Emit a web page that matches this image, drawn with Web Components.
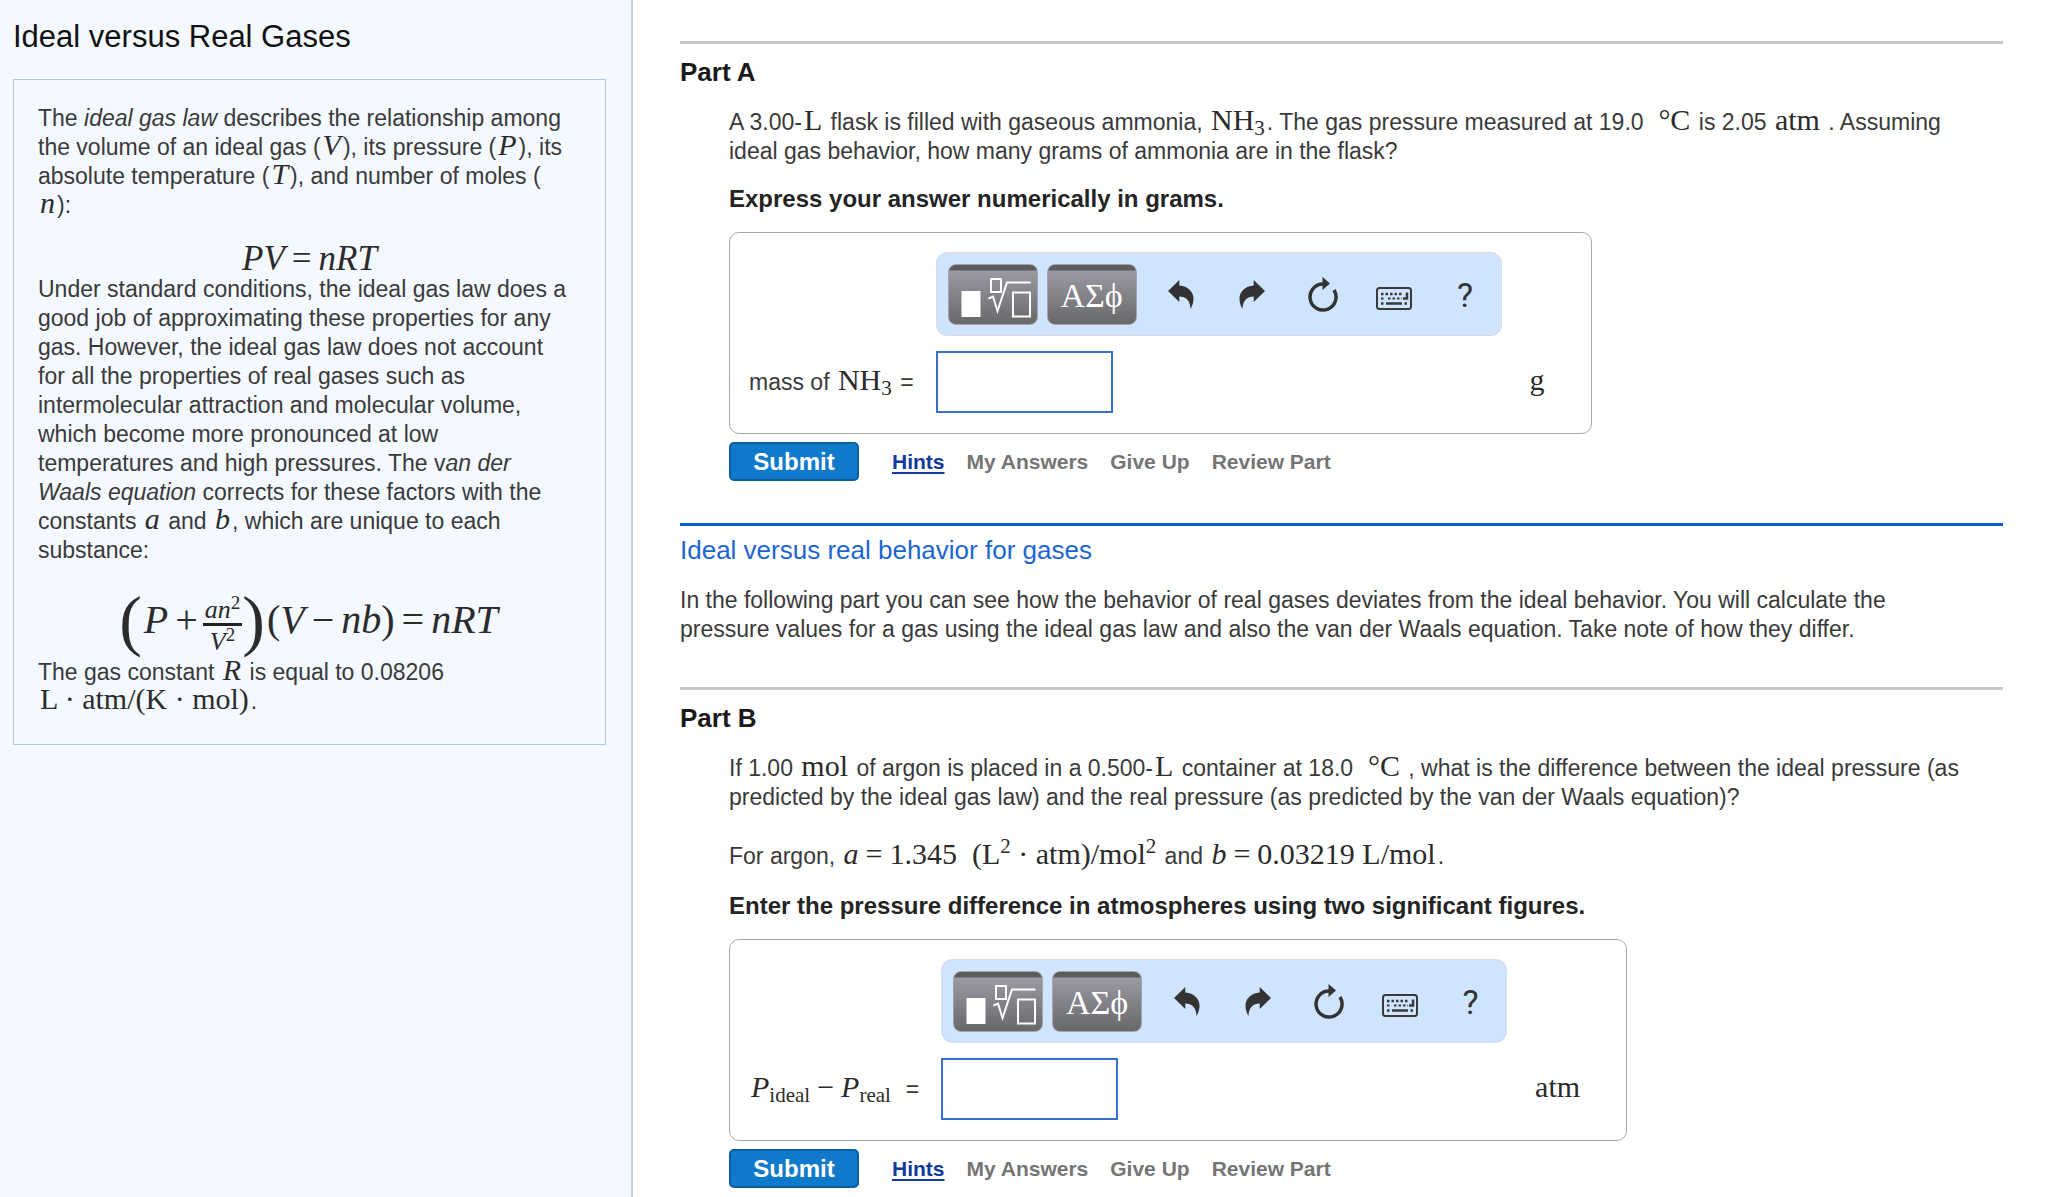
<!DOCTYPE html>
<html lang="en">
<head>
<meta charset="utf-8">
<meta name="viewport" content="width=device-width, initial-scale=1">
<title>Ideal versus Real Gases</title>
<style>
  body {
    margin: 0;
    background: #ffffff;
    color: #3a3a3a;
    font: 23px/29px "Liberation Sans", Arial, sans-serif;
  }

  p { margin: 0; }

  .formula {
    margin-top: 28px;
    line-height: 33px;
  }
</style>
</head>
<body>

<problem-layout>
  <intro-panel slot="side" heading="Ideal versus Real Gases">
    <p>The <i>ideal gas law</i> describes the relationship among the volume of an ideal gas (<math-text><i>V</i></math-text>), its pressure (<math-text><i>P</i></math-text>), its absolute temperature (<math-text><i>T</i></math-text>), and number of moles (<br><math-text><i>n</i></math-text>):</p>
    <math-block>
      <math-text><i>PV</i></math-text><math-text class="op">=</math-text><math-text><i>nRT</i></math-text>
    </math-block>
    <p>Under standard conditions, the ideal gas law does a good job of approximating these properties for any gas. However, the ideal gas law does not account for all the properties of real gases such as intermolecular attraction and molecular volume, which become more pronounced at low temperatures and high pressures. The v<i>an der Waals equation</i> corrects for these factors with the constants <math-text><i>a</i></math-text> and <math-text><i>b</i></math-text>, which are unique to each substance:</p>
    <math-block size="large">
      <math-text class="tall">(</math-text><math-text><i>P</i></math-text><math-text class="op">+</math-text><math-frac>
        <math-text slot="num"><i>an</i><sup>2</sup></math-text>
        <math-text slot="den"><i>V</i><sup>2</sup></math-text>
      </math-frac><math-text class="tall">)</math-text><math-text>(<i>V</i></math-text><math-text class="op">−</math-text><math-text><i>nb</i>)</math-text><math-text class="op">=</math-text><math-text><i>nRT</i></math-text>
    </math-block>
    <p>The gas constant <math-text><i>R</i></math-text> is equal to 0.08206 <math-text>L · atm/(K · mol)</math-text>.</p>
  </intro-panel>

  <problem-part heading="Part A">
    <p>A 3.00-<math-text>L</math-text> flask is filled with gaseous ammonia, <math-text>NH<sub>3</sub></math-text>. The gas pressure measured at 19.0 &nbsp;<math-text>°C</math-text> is 2.05 <math-text>atm</math-text> . Assuming ideal gas behavior, how many grams of ammonia are in the flask?</p>
    <span slot="instruction">Express your answer numerically in grams.</span>
    <answer-box slot="answer">
      <span slot="label">mass of <math-text>NH<sub>3</sub></math-text> =</span>
      <math-text slot="unit">g</math-text>
    </answer-box>
  </problem-part>

  <info-section heading="Ideal versus real behavior for gases">
    <p>In the following part you can see how the behavior of real gases deviates from the ideal behavior. You will calculate the pressure values for a gas using the ideal gas law and also the van der Waals equation. Take note of how they differ.</p>
  </info-section>

  <problem-part heading="Part B">
    <p>If 1.00 <math-text>mol</math-text> of argon is placed in a 0.500-<math-text>L</math-text> container at 18.0 &nbsp;<math-text>°C</math-text> , what is the difference between the ideal pressure (as predicted by the ideal gas law) and the real pressure (as predicted by the van der Waals equation)?</p>
    <p class="formula">For argon, <math-text><i>a</i></math-text><math-text class="op">=</math-text><math-text>1.345 &nbsp;(L<sup>2</sup> · atm)/mol<sup>2</sup></math-text> and <math-text><i>b</i></math-text><math-text class="op">=</math-text><math-text>0.03219 L/mol</math-text>.</p>
    <span slot="instruction">Enter the pressure difference in atmospheres using two significant figures.</span>
    <answer-box slot="answer">
      <span slot="label"><math-text><i>P</i><sub>ideal</sub></math-text><math-text class="op">−</math-text><math-text><i>P</i><sub>real</sub></math-text> &nbsp;=</span>
      <math-text slot="unit">atm</math-text>
    </answer-box>
  </problem-part>
</problem-layout>

<script>
  // Shared base: each element only has to describe its own markup.
  class BaseElement extends HTMLElement {
    constructor() {
      super();
      this.attachShadow({ mode: "open" });
    }

    connectedCallback() {
      this.shadowRoot.innerHTML = this.render().trim();
    }
  }

  class ProblemLayout extends BaseElement {
    render() {
      return `
        <style>
          :host {
            display: grid;
            grid-template-columns: 633px minmax(0, 1fr);
            min-height: 100vh;
          }

          aside {
            box-sizing: border-box;
            padding: 19px 25px 20px 13px;
            background: #f4f8ff;
            border-right: 2px solid #c3d1e2;
          }

          main { padding: 41px 43px 8px 47px; }
        </style>
        <aside><slot name="side"></slot></aside>
        <main><slot></slot></main>
      `;
    }
  }

  class IntroPanel extends BaseElement {
    render() {
      return `
        <style>
          :host { display: block; }

          h1 {
            margin: 0 0 24px;
            color: #111111;
            font-size: 31px;
            font-weight: normal;
            line-height: 36px;
          }

          .box {
            padding: 24px 24px 28px;
            border: 1px solid #b4c8dd;
          }

          ::slotted(p) { padding-right: 10px; }
        </style>
        <h1>${this.getAttribute("heading")}</h1>
        <div class="box"><slot></slot></div>
      `;
    }
  }

  // Run of serif maths, upright unless wrapped in <i>.
  // No whitespace around the slot: it would show up inside the sentence.
  class MathText extends BaseElement {
    render() {
      return `
        <style>
          :host {
            margin: 0 2px;
            color: #2b2b2b;
            font-family: "Liberation Serif", "Times New Roman", serif;
            font-size: var(--math-size, 30px);
            line-height: 20px;
            white-space: nowrap;
          }

          :host(.op) { margin: 0 5px; }

          :host(.tall) {
            margin: 0;
            font-size: 68px;
          }

          ::slotted(sub),
          ::slotted(sup) {
            font-size: var(--script-size, 21px);
            line-height: 0;
          }

          ::slotted(sub) { vertical-align: -5px; }
          ::slotted(sup) { vertical-align: var(--sup-rise, 11px); }
        </style><slot></slot>`;
    }
  }

  class MathFrac extends BaseElement {
    render() {
      return `
        <style>
          :host {
            --math-size: 26px;
            --script-size: 19px;
            --sup-rise: 9px;
            display: inline-flex;
            flex-direction: column;
            align-items: center;
            margin-top: 11px;
          }

          .bar {
            align-self: stretch;
            height: 3px;
            margin: 3px 0 6px;
            background: #222222;
          }
        </style>
        <slot name="num"></slot>
        <div class="bar"></div>
        <slot name="den"></slot>
      `;
    }
  }

  class MathBlock extends BaseElement {
    render() {
      return `
        <style>
          :host {
            --math-size: 35px;
            display: flex;
            align-items: center;
            justify-content: center;
            height: 25px;
            padding: 26px 0 4px;
          }

          :host([size="large"]) {
            --math-size: 40px;
            height: 66px;
            padding: 22px 0 5px;
          }
        </style>
        <slot></slot>
      `;
    }
  }

  class ProblemPart extends BaseElement {
    render() {
      return `
        <style>
          :host {
            display: block;
            border-top: 3px solid #c8c8c8;
            padding-top: 13px;
          }

          h2 {
            margin: 0 0 21px;
            color: #1a1a1a;
            font-size: 26px;
            line-height: 30px;
          }

          .content { padding-left: 49px; }

          ::slotted(p) { padding-right: 30px; }

          .instruction {
            margin: 18px 0 19px;
            color: #242424;
            font-size: 24px;
            font-weight: bold;
          }
        </style>
        <h2>${this.getAttribute("heading")}</h2>
        <div class="content">
          <slot></slot>
          <div class="instruction"><slot name="instruction"></slot></div>
          <slot name="answer"></slot>
          <action-bar></action-bar>
        </div>
      `;
    }
  }

  class InfoSection extends BaseElement {
    render() {
      return `
        <style>
          :host {
            display: block;
            margin: 42px 0 43px;
            border-top: 3px solid #0a5fd3;
            padding-top: 9px;
          }

          h2 {
            margin: 0 0 21px;
            color: #1c66d2;
            font-size: 26px;
            font-weight: normal;
            line-height: 30px;
          }

          ::slotted(p) { padding-right: 40px; }
        </style>
        <h2>${this.getAttribute("heading")}</h2>
        <slot></slot>
      `;
    }
  }

  class AnswerBox extends BaseElement {
    render() {
      return `
        <style>
          :host {
            display: grid;
            grid-template-columns: auto auto auto;
            align-items: center;
            justify-content: start;
            row-gap: 15px;
            box-sizing: border-box;
            width: fit-content;
            padding: 19px 44px 20px 19px;
            border: 1px solid #a9a9a9;
            border-radius: 10px;
          }

          math-toolbar { grid-column: 2; }
          label { grid-column: 1; padding-right: 22px; }

          input {
            box-sizing: border-box;
            width: 177px;
            height: 62px;
            margin: 0;
            padding: 0 10px;
            border: 2px solid #3a6ed0;
            background: #ffffff;
            font: inherit;
          }

          .unit { grid-column: 3; padding-left: 26px; }
        </style>
        <math-toolbar></math-toolbar>
        <label for="answer"><slot name="label"></slot></label>
        <input id="answer" type="text">
        <span class="unit"><slot name="unit"></slot></span>
      `;
    }
  }

  class MathToolbar extends BaseElement {
    render() {
      return `
        <style>
          :host {
            display: flex;
            align-items: center;
            box-sizing: border-box;
            height: 84px;
            padding-left: 11px;
            background: #cfe5ff;
            border: 1px solid #d8dbe0;
            border-radius: 11px;
          }

          button {
            display: flex;
            align-items: center;
            justify-content: center;
            box-sizing: border-box;
            width: 71px;
            height: 61px;
            padding: 2px 0 0;
            border: 0;
            background: none;
            color: #333333;
            font: 34px/40px Roboto, "Liberation Sans", sans-serif;
            cursor: pointer;
          }

          .key {
            width: 90px;
            margin-right: 9px;
            padding: 4px 0 0;
            border: 1px solid #a5a5a5;
            border-radius: 8px;
            background: linear-gradient(#5c5c5e 5px, #9b99a3 6px, #68686a);
            color: #ffffff;
            font-family: "Liberation Serif", "Times New Roman", serif;
          }
        </style>
        <button class="key" type="button" aria-label="Templates">
          <svg width="88" height="55" viewBox="1 5 88 55" fill="none" stroke="#fff">
            <rect x="13.5" y="27" width="19" height="26" fill="#fff" stroke="none"/>
            <rect x="43" y="15" width="10" height="13" stroke-width="2"/>
            <path d="M40.5 34.5l4.5-2 4.5 14.5 9.500-28.500H82.500" stroke-width="2"/>
            <rect x="65" y="28.500" width="17" height="24" stroke-width="2"/>
          </svg>
        </button>
        <button class="key" type="button" aria-label="Symbols">ΑΣϕ</button>
        <button type="button" aria-label="Undo">
          <svg width="26" height="30" viewBox="0 0 26 30" fill="#333">
            <path d="M0 11L11.300 0v5.500C20 6 26 12 25.500 19.500c-.2 4-1.500 7-3 9.500C22.500 21 18 16.500 11.300 16.500V22z"/>
          </svg>
        </button>
        <button type="button" aria-label="Redo">
          <svg width="26" height="30" viewBox="0 0 26 30" fill="#333">
            <path d="M26 11L14.700 0v5.500C6 6 0 12 .5 19.500c.2 4 1.500 7 3 9.500C3.500 21 8 16.500 14.700 16.500V22z"/>
          </svg>
        </button>
        <button type="button" aria-label="Reset">
          <svg width="30" height="36" viewBox="0 0 30 36">
            <path d="M15 7A13 13 0 1 0 26 13" fill="none" stroke="#333" stroke-width="3.500"/>
            <path d="M14.500 0l7.500 6.500-7.500 6.500z" fill="#333"/>
          </svg>
        </button>
        <button type="button" aria-label="Keyboard">
          <svg width="36" height="36" viewBox="0 -10 36 36" fill="none" stroke="#3a3a3a">
            <rect x="1" y="1" width="34" height="21" rx="2.500" stroke-width="2"/>
            <path d="M5 7h22" stroke-width="2.500" stroke-dasharray="2.500 2"/>
            <path d="M5 11.500h4M12 11.500h14" stroke-width="2" stroke-dasharray="2.500 2"/>
            <path d="M31 5.500v6h-4" stroke-width="2.500"/>
            <path d="M5 16.500h2.500M10 16.500h16M28.500 16.500H31" stroke-width="2.500"/>
          </svg>
        </button>
        <button type="button" aria-label="Help">?</button>
      `;
    }
  }

  class ActionBar extends BaseElement {
    render() {
      return `
        <style>
          :host {
            display: flex;
            align-items: center;
            gap: 22px;
            margin-top: 8px;
            font-size: 21px;
            font-weight: bold;
          }

          button {
            width: 130px;
            height: 39px;
            margin-right: 11px;
            padding: 0;
            border: 2px solid #0b5f9f;
            border-radius: 5px;
            background: #0f7acc;
            color: #ffffff;
            font: bold 24px/29px "Liberation Sans", Arial, sans-serif;
            cursor: pointer;
          }

          a { color: #757575; text-decoration: none; }

          a.hints {
            color: #12399c;
            text-decoration: underline;
            text-decoration-thickness: 2px;
            text-underline-offset: 3px;
          }
        </style>
        <button type="button">Submit</button>
        <a class="hints" href="#hints">Hints</a>
        <a href="#answers">My Answers</a>
        <a href="#give-up">Give Up</a>
        <a href="#review">Review Part</a>
      `;
    }
  }

  customElements.define("problem-layout", ProblemLayout);
  customElements.define("intro-panel", IntroPanel);
  customElements.define("math-text", MathText);
  customElements.define("math-frac", MathFrac);
  customElements.define("math-block", MathBlock);
  customElements.define("problem-part", ProblemPart);
  customElements.define("info-section", InfoSection);
  customElements.define("answer-box", AnswerBox);
  customElements.define("math-toolbar", MathToolbar);
  customElements.define("action-bar", ActionBar);
</script>
</body>
</html>
